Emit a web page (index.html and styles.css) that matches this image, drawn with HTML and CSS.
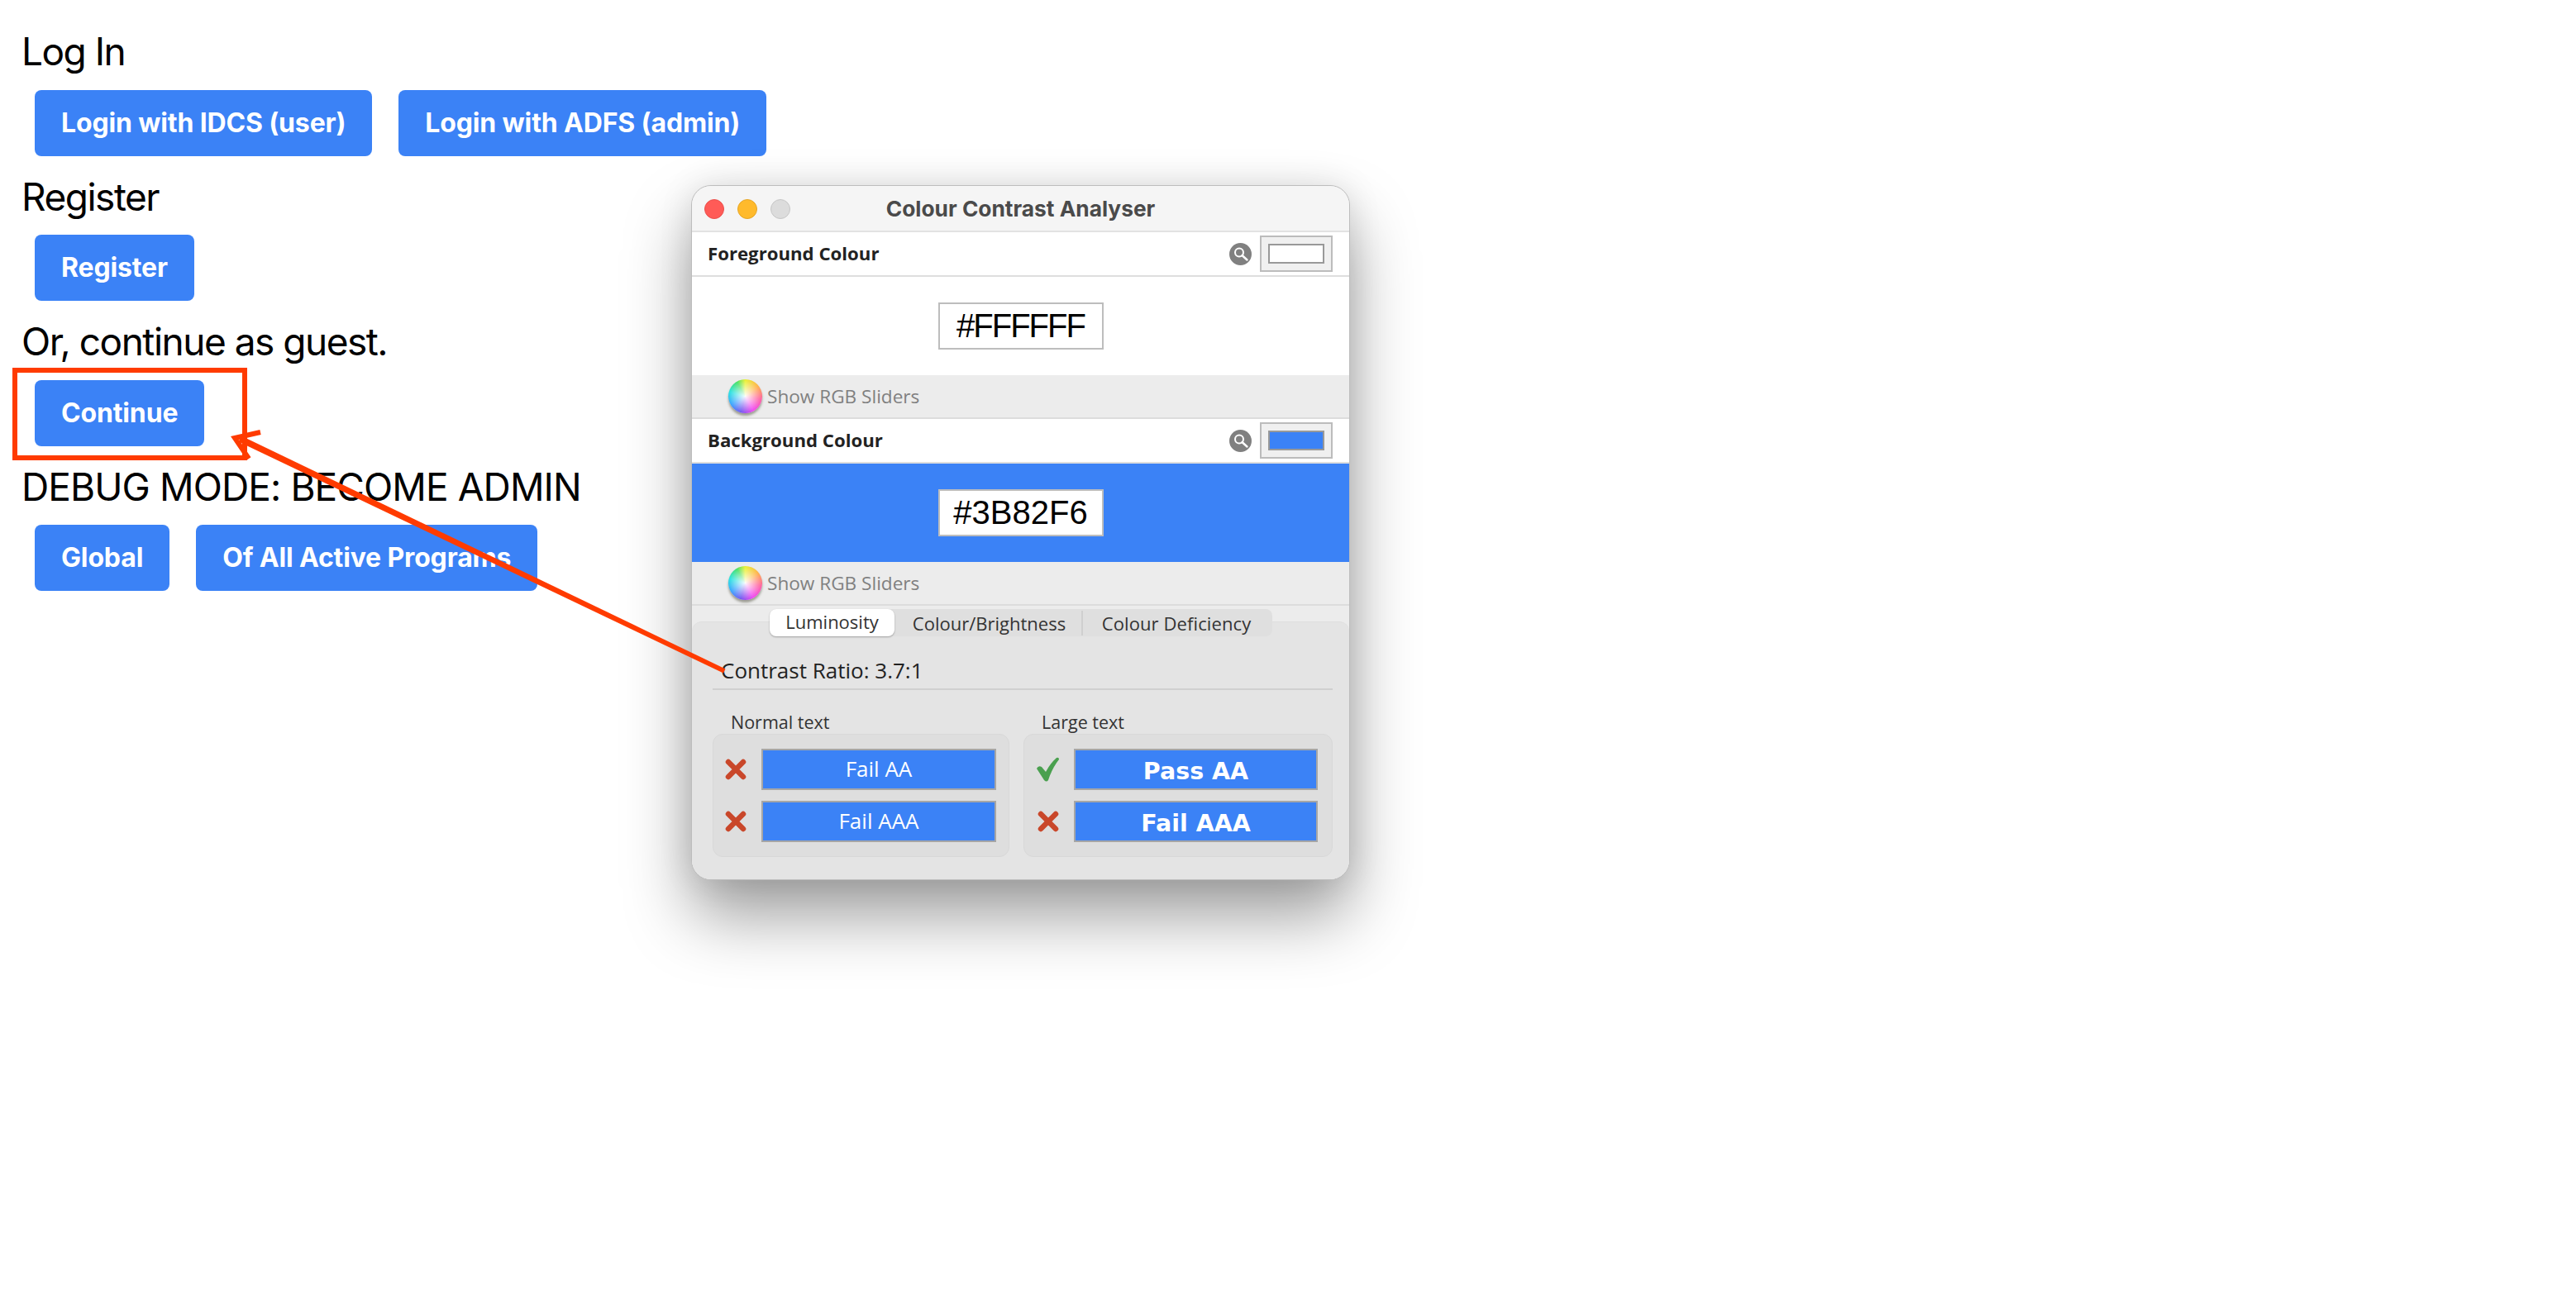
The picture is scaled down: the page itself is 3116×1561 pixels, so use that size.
FILE: index.html
```html
<!DOCTYPE html>
<html lang="en">
<head>
    <meta charset="UTF-8">
    <title>Log In</title>
    <link rel="stylesheet" href="styles.css">
</head>
<body>
    <div class="page">
        <h2>Log In</h2>
        <div class="btn-row">
            <a class="btn">Login with IDCS (user)</a>
            <a class="btn">Login with ADFS (admin)</a>
        </div>
        <h2>Register</h2>
        <div class="btn-row">
            <a class="btn">Register</a>
        </div>
        <h2>Or, continue as guest.</h2>
        <div class="btn-row">
            <a class="btn">Continue</a>
        </div>
        <h2 class="caps">DEBUG MODE: BECOME ADMIN</h2>
        <div class="btn-row">
            <a class="btn">Global</a>
            <a class="btn">Of All Active Programs</a>
        </div>
    </div>

    <div class="cca">
        <div class="cca-title">
            <div class="lights">
                <span class="light red"></span>
                <span class="light yellow"></span>
                <span class="light grey"></span>
            </div>
            <span>Colour Contrast Analyser</span>
        </div>

        <div class="colour-row">
            <b>Foreground Colour</b>
            <svg class="lens" viewBox="0 0 27 27"><circle cx="13.5" cy="13.5" r="13.5" fill="#808080"/><circle cx="12" cy="11.5" r="5" fill="none" stroke="#fff" stroke-width="2"/><path d="M15.5 15l6 5.5" stroke="#fff" stroke-width="2.4" stroke-linecap="round"/></svg>
            <div class="swatch"><div class="swatch-in"></div></div>
        </div>
        <div class="hex-area">
            <div class="hex tight">#FFFFFF</div>
        </div>
        <div class="slider-row">
            <span class="wheel"></span>
            <span>Show RGB Sliders</span>
        </div>

        <div class="colour-row">
            <b>Background Colour</b>
            <svg class="lens" viewBox="0 0 27 27"><circle cx="13.5" cy="13.5" r="13.5" fill="#808080"/><circle cx="12" cy="11.5" r="5" fill="none" stroke="#fff" stroke-width="2"/><path d="M15.5 15l6 5.5" stroke="#fff" stroke-width="2.4" stroke-linecap="round"/></svg>
            <div class="swatch"><div class="swatch-in blue"></div></div>
        </div>
        <div class="hex-area blue">
            <div class="hex">#3B82F6</div>
        </div>
        <div class="slider-row">
            <span class="wheel"></span>
            <span>Show RGB Sliders</span>
        </div>

        <div class="lower">
            <div class="tabs">
                <span class="tab active">Luminosity</span>
                <span class="tab brightness">Colour/Brightness</span>
                <span class="tab deficiency">Colour Deficiency</span>
            </div>
            <div class="panel">
                <div class="ratio">Contrast Ratio: 3.7:1</div>
                <div class="results">
                    <div class="col col-normal">
                        <div class="col-label">Normal text</div>
                        <div class="group">
                            <div class="result">
                                <svg class="mark" viewBox="0 0 26 26"><path d="M4 4l18 18M22 4L4 22" stroke="#c9472a" stroke-width="6.5" stroke-linecap="round"/></svg>
                                <div class="sample">Fail AA</div>
                            </div>
                            <div class="result">
                                <svg class="mark" viewBox="0 0 26 26"><path d="M4 4l18 18M22 4L4 22" stroke="#c9472a" stroke-width="6.5" stroke-linecap="round"/></svg>
                                <div class="sample">Fail AAA</div>
                            </div>
                        </div>
                    </div>
                    <div class="col col-large">
                        <div class="col-label">Large text</div>
                        <div class="group">
                            <div class="result">
                                <svg class="mark check" viewBox="0 0 30 32"><path d="M1 15Q3 11 7 13L12 19Q17 9 25 2Q28 1 28 4Q20 14 15 29Q13 32 10 29Z" fill="#4aa04f"/></svg>
                                <div class="sample big">Pass AA</div>
                            </div>
                            <div class="result">
                                <svg class="mark cross" viewBox="0 0 26 26"><path d="M4 4l18 18M22 4L4 22" stroke="#c9472a" stroke-width="6.5" stroke-linecap="round"/></svg>
                                <div class="sample big">Fail AAA</div>
                            </div>
                        </div>
                    </div>
                </div>
            </div>
        </div>
    </div>

    <!-- red annotation drawn on top of the screenshot -->
    <svg class="marks" viewBox="0 0 3116 1561">
        <rect x="18" y="448" width="278" height="106" fill="none" stroke="#ff3b00" stroke-width="6"/>
        <polygon points="292,527.500 288.500,534.500 875,814.500 877.500,809.500" fill="#ff3b00"/>
        <path d="M315 523L284 530L301 555" fill="none" stroke="#ff3b00" stroke-width="6"/>
    </svg>
</body>
</html>
```

FILE: styles.css
```css
*{
    margin: 0;
    padding: 0;
    box-sizing: border-box;
}
body{
    background-color: #fff;
    color: #000;
    font-family: Inter, "Liberation Sans", sans-serif;
    min-height: 100vh;
    overflow: hidden;
}
.page{
    padding: 29px 26px 0;
}
h2{
    font-size: 46px;
    line-height: 60.5px;
    padding-top: 3px;
    font-weight: 400;
    letter-spacing: -1.5px;
}
h2.caps{
    letter-spacing: -.9px;
}
.btn-row{
    display: flex;
    gap: 32px;
    padding: 16px;
}
.btn{
    background-color: #3b82f6;
    color: #fff;
    font-size: 32px;
    line-height: 48px;
    font-weight: 700;
    letter-spacing: -.15px;
    padding: 16px 32px;
    border-radius: 8px;
}

/* analyser window */
.cca{
    position: absolute;
    left: 836px;
    top: 224px;
    width: 797px;
    height: 841px;
    display: flex;
    flex-direction: column;
    background-color: #e4e4e4;
    border: 1px solid #bdbdbd;
    border-radius: 24px;
    overflow: hidden;
    box-shadow: 0 44px 80px rgba(0,0,0,.38), 0 0 40px rgba(0,0,0,.1);
    font-family: "Open Sans", "Liberation Sans", sans-serif;
}
.cca-title{
    height: 56px;
    flex: none;
    display: flex;
    align-items: center;
    justify-content: center;
    background-color: #f5f5f5;
    border-bottom: 2px solid #e2e2e2;
    color: #4a4a4a;
    font-size: 26.300px;
    font-weight: 700;
    font-family: Inter, sans-serif;
    position: relative;
}
.lights{
    position: absolute;
    left: 15px;
    top: 16px;
    display: flex;
    gap: 16px;
}
.light{
    width: 24px;
    height: 24px;
    border-radius: 50%;
}
.red{
    background-color: #ff5b57;
    border: 1px solid #ea4f4b;
}
.yellow{
    background-color: #ffba2c;
    border: 1px solid #e5a526;
}
.grey{
    background-color: #dcdcdc;
    border: 1px solid #c6c6c6;
}
.colour-row{
    height: 54px;
    flex: none;
    display: flex;
    align-items: center;
    background-color: #fff;
    border-bottom: 2px solid #dedede;
    padding: 0 20px 0 19px;
    color: #222;
    font-size: 22.200px;
}
.colour-row b{
    flex: auto;
    margin-bottom: 2px;
}
.lens{
    width: 27px;
    height: 27px;
    margin-right: 10px;
}
.swatch{
    width: 88px;
    height: 44px;
    display: flex;
    align-items: center;
    justify-content: center;
    background-color: #f0f0f0;
    border: 2px solid #bcbcbc;
}
.swatch-in{
    width: 68px;
    height: 24px;
    background-color: #fff;
    border: 2px solid #999;
}
.swatch-in.blue{
    background-color: #3b82f6;
}
.hex-area{
    height: 119px;
    flex: none;
    display: flex;
    align-items: center;
    justify-content: center;
    background-color: #fff;
}
.hex-area.blue{
    background-color: #3b82f6;
}
.hex{
    width: 200px;
    height: 57px;
    background-color: #fff;
    border: 2px solid #bdbdbd;
    font-family: "Liberation Sans", sans-serif;
    font-size: 40px;
    line-height: 53px;
    text-align: center;
}
.hex.tight{
    letter-spacing: -2px;
}
.slider-row{
    height: 53px;
    flex: none;
    display: flex;
    align-items: center;
    gap: 6px;
    padding-left: 44px;
    background-color: #ececec;
    border-bottom: 2px solid #dcdcdc;
    color: #808080;
    font-size: 22.600px;
}
.wheel{
    width: 41px;
    height: 41px;
    border-radius: 50%;
    background:
        radial-gradient(circle at 50% 50%, rgba(255,255,255,.95), rgba(255,255,255,0) 72%),
        conic-gradient(#e8f02a, #ffb040 50deg, #ff5a9a 100deg, #f040f0 150deg, #7050f0 195deg, #30a0ff 240deg, #20e0e0 285deg, #40e060 330deg, #e8f02a);
    box-shadow: 0 3px 3px rgba(60,60,40,.45);
}
.lower{
    flex: auto;
    display: flex;
    flex-direction: column;
    background-color: #ececec;
    padding-top: 4px;
}
.tabs{
    align-self: flex-start;
    margin-left: 94px;
    height: 33px;
    width: 608px;
    display: flex;
    align-items: center;
    background-color: #dfdfdf;
    border-radius: 8px;
    color: #333;
    font-size: 22px;
    position: relative;
    z-index: 1;
}
.tab{
    text-align: center;
    white-space: nowrap;
}
.tab.active{
    width: 151px;
    height: 33px;
    line-height: 31px;
    background-color: #fff;
    border-radius: 8px;
    box-shadow: 0 1px 2px rgba(0,0,0,.3);
}
.tab.brightness{
    width: 228px;
    padding-left: 3px;
    border-right: 2px solid #cfcfcf;
}
.tab.deficiency{
    width: 226px;
    letter-spacing: .1px;
}
.panel{
    flex: auto;
    margin-top: -18px;
    padding: 26px 20px 0 25px;
    background-color: #e4e4e4;
    border-top: 1px solid #dedede;
    border-radius: 12px 12px 0 0;
}
.ratio{
    height: 56px;
    line-height: 32px;
    padding: 16px 0 0 10px;
    border-bottom: 2px solid #d0d0d0;
    color: #222;
    font-size: 26px;
}
.results{
    display: flex;
    gap: 17px;
    margin-top: 24px;
}
.col-normal{
    width: 359px;
}
.col-large{
    width: 374px;
}
.col-label{
    height: 29px;
    line-height: 29px;
    padding-left: 22px;
    color: #333;
    font-size: 21.500px;
}
.group{
    height: 149px;
    padding: 17px 15px 0 14px;
    background-color: #dedede;
    border: 1px solid #d8d8d8;
    border-radius: 12px;
    display: flex;
    flex-direction: column;
    gap: 13px;
}
.col-large .group{
    padding-right: 17px;
}
.result{
    height: 50px;
    display: flex;
    align-items: center;
    justify-content: space-between;
}
.mark{
    width: 26px;
    height: 26px;
    flex: none;
}
.mark.check{
    width: 30px;
    height: 32px;
}
.mark.cross{
    margin-left: 2px;
}
.sample{
    width: 284px;
    height: 50px;
    line-height: 45px;
    background-color: #3b82f6;
    border: 2px solid #a6a6a6;
    color: #fff;
    font-size: 26px;
    text-align: center;
}
.sample.big{
    width: 295px;
    font-size: 28.500px;
    font-weight: 700;
    line-height: 51px;
    font-family: "DejaVu Sans", sans-serif;
}

/* annotation */
.marks{
    position: absolute;
    left: 0;
    top: 0;
    width: 3116px;
    height: 1561px;
    pointer-events: none;
}
```
